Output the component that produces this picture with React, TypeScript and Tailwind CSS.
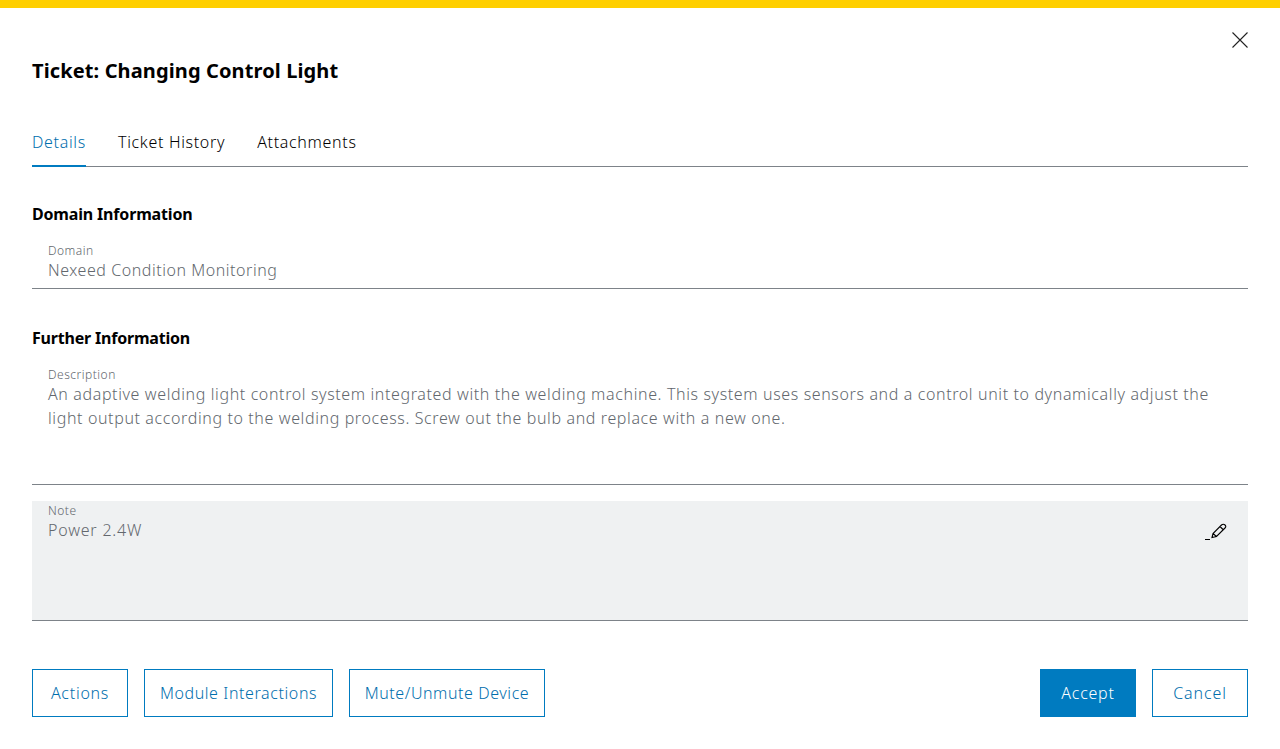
const font = "font-['Noto_Sans',sans-serif]";

function Field({
  label,
  children,
  className,
  valueClass,
}: {
  label: string;
  children: React.ReactNode;
  className: string;
  valueClass: string;
}) {
  return (
    <div className={`relative border-b border-[#7d8389] px-4 ${className}`}>
      <div className="h-[17px] pt-[1px] text-xs font-light leading-[18px] tracking-[0.5px] text-[#62676d]">{label}</div>
      <div className={`text-base font-light leading-6 text-[#62676d] ${valueClass}`}>{children}</div>
    </div>
  );
}

function OutlineButton({ children, className = "" }: { children: React.ReactNode; className?: string }) {
  return (
    <button className={`h-12 border border-[#007bc0] text-base font-light text-[#006ead] ${className}`}>
      {children}
    </button>
  );
}

export default function App() {
  return (
    <div className={`h-[749px] w-[1280px] overflow-hidden bg-white text-black ${font}`}>
      <div className="h-2 bg-[#ffcf00]" />
      <div className="relative px-8">
        <button className="absolute right-[32px] top-[24px]">
          <svg width="16" height="16" viewBox="0 0 16 16" fill="none" stroke="#222" strokeWidth="1.1">
            <path d="M0.5 0.5 15.5 15.5M15.5 0.5 0.5 15.5" />
          </svg>
        </button>
        <h1 className="pt-[47px] text-xl font-bold leading-8 tracking-[0.12px]">Ticket: Changing Control Light</h1>

        <div className="mt-[42px] flex h-[38px] gap-8 border-b border-[#7d8389] text-base font-light tracking-[0.68px]">
          <div className="h-[38px] border-b-2 border-[#007bc0] pt-[1px] text-[#006ead]">Details</div>
          <div className="pt-[1px]">Ticket History</div>
          <div className="pt-[1px]">Attachments</div>
        </div>

        <h2 className="mt-[35px] text-base font-bold leading-6 tracking-[-0.17px]">Domain Information</h2>
        <Field label="Domain" className="mt-[15px] h-12" valueClass="tracking-[0.55px]">
          Nexeed Condition Monitoring
        </Field>

        <h2 className="mt-[37px] text-base font-bold leading-6 tracking-[-0.2px]">Further Information</h2>
        <Field label="Description" className="mt-[15px] h-[120px]" valueClass="tracking-[0.62px]">
          An adaptive welding light control system integrated with the welding machine. This system uses sensors and a control unit to dynamically adjust the light output according to the welding process. Screw out the bulb and replace with a new one.
        </Field>

        <Field label="Note" className="mt-4 h-[120px] bg-[#eff1f2]" valueClass="tracking-[0.8px]">
          Power 2.4W
          <svg className="absolute right-[21px] top-[21px]" width="22" height="18" viewBox="0 0 22 18" fill="none" stroke="black" strokeWidth="1.1">
            <path d="M0 17.5H5M7 15.5 8 11.5 16.5 3C17.5 2 19 2 20 3S21 5 20 6L11.5 14.5ZM8 11.5 11.5 14.5M15 4.5 18.5 8" />
          </svg>
        </Field>

        <div className="mt-12 flex gap-4">
          <OutlineButton className="w-24 tracking-[0.75px]">Actions</OutlineButton>
          <OutlineButton className="w-[189px] tracking-[0.6px]">Module Interactions</OutlineButton>
          <OutlineButton className="w-[196px] tracking-[0.57px]">Mute/Unmute Device</OutlineButton>
          <button className="ml-auto h-12 w-24 bg-[#007bc0] text-base font-light tracking-[0.75px] text-white">Accept</button>
          <OutlineButton className="w-24 tracking-[0.9px]">Cancel</OutlineButton>
        </div>
      </div>
    </div>
  );
}
